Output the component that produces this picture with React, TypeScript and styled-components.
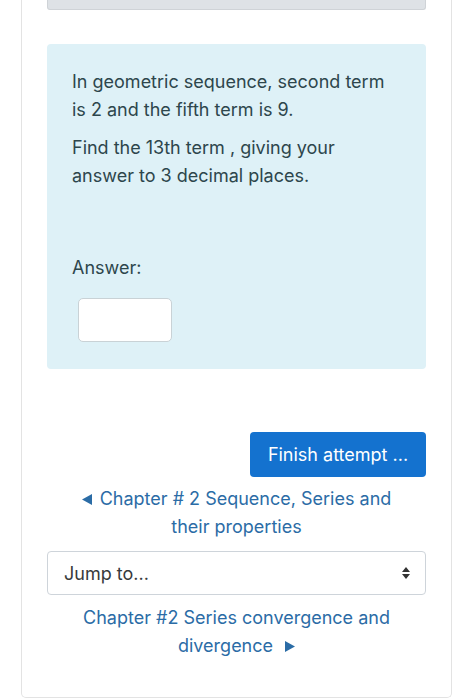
import React from "react";
import styled, { createGlobalStyle } from "styled-components";

const Global = createGlobalStyle`
  html, body { margin: 0; padding: 0; background: #ffffff; }
  body { font-family: "Inter", "Noto Sans", "Liberation Sans", sans-serif; -webkit-font-smoothing: antialiased; }
  * { box-sizing: border-box; }
`;

const Page = styled.div`
  width: 473px;
  height: 700px;
  overflow: hidden;
  padding: 0 21px 0 21px;
`;

const Card = styled.div`
  width: 431px;
  height: 698px;
  border: 1px solid #e3e3e3;
  border-top: none;
  border-radius: 0 0 5px 5px;
  padding: 0 25px;
  display: flex;
  flex-direction: column;
`;

const TopBox = styled.div`
  height: 10px;
  background: #dee2e6;
  border: 1px solid #cfd3d7;
  border-top: none;
  border-radius: 0 0 3px 3px;
`;

const Formulation = styled.div`
  margin-top: 34px;
  background: #def1f7;
  border-radius: 4px;
  padding: 24px 25px 27px 25px;
  color: #2d464c;
  font-size: 18px;
  line-height: 28px;
`;

const Para = styled.p`
  margin: 0 0 10px 0;
`;

const Label = styled.div`
  margin-top: 64px;
`;

const AnswerInput = styled.div`
  margin: 16px 0 0 6px;
  width: 94px;
  height: 44px;
  background: #ffffff;
  border: 1px solid #c9d2d6;
  border-radius: 5px;
`;

const ButtonRow = styled.div`
  margin-top: 63px;
  display: flex;
  justify-content: flex-end;
`;

const FinishButton = styled.button`
  height: 45px;
  width: 176px;
  border: none;
  border-radius: 4px;
  background: #1472cf;
  color: #ffffff;
  font-family: inherit;
  font-size: 18px;
  padding: 0;
`;

const NavLink = styled.div<{ $top: number }>`
  margin-top: ${(p) => p.$top}px;
  text-align: center;
  color: #2b6ca6;
  font-size: 18px;
  line-height: 28px;
  padding: 0 30px;
`;

const ArrowIcon = styled.svg<{ $gap: "left" | "right" }>`
  display: inline-block;
  vertical-align: 0px;
  margin-${(p) => p.$gap}: ${(p) => (p.$gap === "left" ? 12 : 8)}px;
`;

const Select = styled.div`
  margin-top: 10px;
  height: 44px;
  border: 1px solid #ced4da;
  border-radius: 4px;
  display: flex;
  align-items: center;
  justify-content: space-between;
  padding: 0 14px 0 16px;
  color: #373a3c;
  font-size: 18px;
`;

export default function App() {
  return (
    <>
      <Global />
      <Page>
        <Card>
          <TopBox />
          <Formulation>
            <Para>In geometric sequence, second term is 2 and the fifth term is 9.</Para>
            <Para>Find the 13th term , giving your answer to 3 decimal places.</Para>
            <Label>Answer:</Label>
            <AnswerInput />
          </Formulation>
          <ButtonRow>
            <FinishButton>Finish attempt ...</FinishButton>
          </ButtonRow>
          <NavLink $top={8}>
            <ArrowIcon $gap="right" width="10" height="11" viewBox="0 0 10 11">
              <path d="M0 5.5 L10 0 V11 Z" fill="#2b6ca6" />
            </ArrowIcon>
            Chapter # 2 Sequence, Series and their properties
          </NavLink>
          <Select>
            <span>Jump to...</span>
            <svg width="10" height="14" viewBox="0 0 10 14">
              <path d="M5 1 L9 6 H1 Z M5 13 L1 8 H9 Z" fill="#333" />
            </svg>
          </Select>
          <NavLink $top={9}>
            Chapter #2 Series convergence and divergence
            <ArrowIcon $gap="left" width="10" height="11" viewBox="0 0 10 11">
              <path d="M10 5.5 L0 0 V11 Z" fill="#2b6ca6" />
            </ArrowIcon>
          </NavLink>
        </Card>
      </Page>
    </>
  );
}
